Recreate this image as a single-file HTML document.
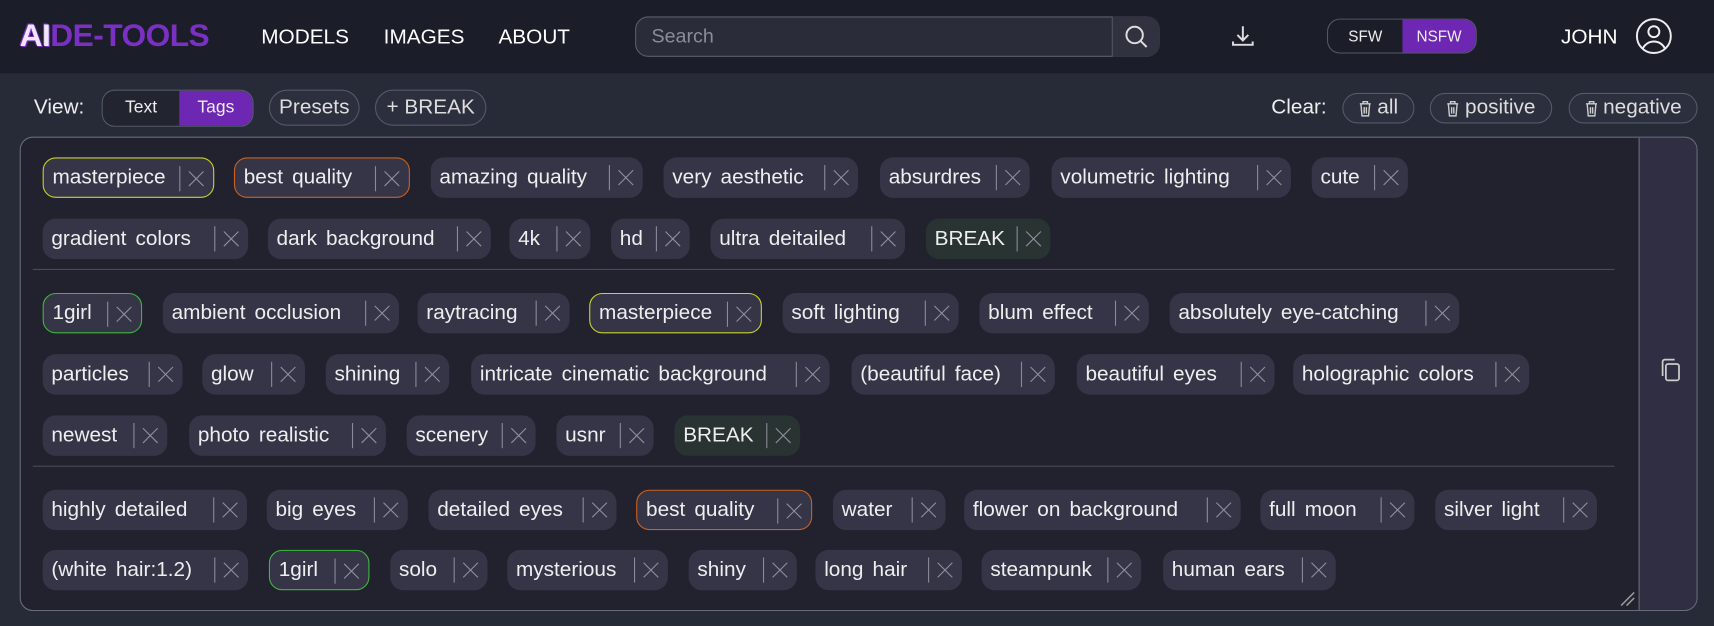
<!DOCTYPE html>
<html><head><meta charset="utf-8"><style>
*{box-sizing:border-box;margin:0;padding:0}
html,body{width:1714px;height:626px;overflow:hidden;background:#262b37;font-family:"Liberation Sans",sans-serif;color:#eee}
#w{position:absolute;left:0;top:0;width:1568px;height:573px;transform:scale(1.0931);transform-origin:0 0}
.hdr{position:absolute;left:0;top:0;width:1568px;height:67px;background:#1b1e29}
.abs{position:absolute}
.nav{font-size:19px;color:#fff;top:24px}
.btn{position:absolute;height:33px;border:1px solid #555a68;border-radius:17px;background:#2c2f3d;font-size:18px;color:#ddd;display:flex;align-items:center;justify-content:center;gap:5px}
.btn svg{flex:none}
.panel{position:absolute;left:18px;top:125px;width:1535px;height:434px;border:1px solid #6a6c7a;border-radius:12px;background:#22212e;overflow:hidden}
.side{position:absolute;right:0;top:0;width:53px;height:100%;background:#2f2e42;border-left:1px solid #6a6c7a}
.c{position:absolute;height:37px;border-radius:12px;background:#363548;font-size:19px;color:#eee;display:flex;align-items:center;padding-left:8px;word-spacing:3px;white-space:nowrap;overflow:hidden}
.c:after{content:"";position:absolute;right:30px;top:7px;height:23px;border-left:1px solid #8a8a98}
.c i{position:absolute;right:9px;top:9px;width:14px;height:18px}
.c i:before,.c i:after{content:"";position:absolute;left:7px;top:0;height:19px;border-left:1.3px solid #8f8f9c;transform:rotate(45deg)}
.c i:after{transform:rotate(-45deg)}
.y{border:1px solid #c9d12c}.o{border:1px solid #c8621e}.g{border:1px solid #3cb83c}.b{background:#283332}
.hr{position:absolute;left:11px;width:1447px;border-top:1px solid #4a4b5a}
</style></head><body><div id="w">
<div class="hdr">
<div class="abs" style="left:18px;top:17px;font-size:29px;font-weight:bold;letter-spacing:-0.5px;color:#7b30c4"><span style="color:#f0e6ff;text-shadow:0 0 2px #7b30c4,1px 1px 0 #7b30c4,-1px -1px 0 #7b30c4">AI</span>DE-TOOLS</div>
<div class="abs nav" style="left:239px">MODELS</div>
<div class="abs nav" style="left:351px">IMAGES</div>
<div class="abs nav" style="left:456px">ABOUT</div>
<div class="abs" style="left:581px;top:15px;width:480px;height:37px;border:1px solid #5a5d6a;border-radius:12px;background:#2a2d39"></div>
<div class="abs" style="left:596px;top:23px;font-size:18px;color:#8a8d98">Search</div>
<div class="abs" style="left:1017px;top:15px;width:44px;height:37px;border-left:1px solid #5a5d6a;background:#30323f;border-radius:0 12px 12px 0"></div>
<svg class="abs" style="left:1028px;top:22px" width="24" height="24" viewBox="0 0 24 24" fill="none" stroke="#ddd" stroke-width="1.8"><circle cx="10" cy="10" r="7.5"/><path d="M15.5 15.5L21 21"/></svg>
<svg class="abs" style="left:1125px;top:21px" width="24" height="24" viewBox="0 0 24 24" fill="none" stroke="#ddd" stroke-width="1.8"><path d="M12 3v13M7 11l5 5 5-5M3 17v3h18v-3"/></svg>
<div class="abs" style="left:1214px;top:17px;width:137px;height:32px;border:1px solid #555a68;border-radius:12px;overflow:hidden;display:flex;font-size:14px">
<div style="width:68px;display:flex;align-items:center;justify-content:center;background:#1b1e29">SFW</div>
<div style="flex:1;display:flex;align-items:center;justify-content:center;background:#6d27b3">NSFW</div></div>
<div class="abs nav" style="left:1428px">JOHN</div>
<svg class="abs" style="left:1496px;top:16px" width="34" height="34" viewBox="0 0 34 34" fill="none" stroke="#eee" stroke-width="1.8"><circle cx="17" cy="17" r="15.5"/><circle cx="17" cy="13" r="5"/><path d="M7 28c3-5 7-6 10-6s7 1 10 6"/></svg>
</div>
<div class="abs" style="left:31px;top:88px;font-size:19px">View:</div>
<div class="abs" style="left:93px;top:82px;width:139px;height:34px;border:1px solid #555a68;border-radius:12px;overflow:hidden;display:flex;font-size:16px">
<div style="width:70px;display:flex;align-items:center;justify-content:center;background:#22252f">Text</div>
<div style="flex:1;display:flex;align-items:center;justify-content:center;background:#6d27b3">Tags</div></div>
<div class="btn" style="left:246px;top:82px;width:83px;font-size:19px">Presets</div>
<div class="btn" style="left:343px;top:82px;width:102px;font-size:19px">+ BREAK</div>
<div class="abs" style="left:1163px;top:88px;font-size:19px">Clear:</div>
<div class="btn" style="left:1228px;top:85px;width:66px;height:28px;font-size:19px"><svg width="12" height="15" viewBox="0 0 12 15" fill="none" stroke="#ccc" stroke-width="1.3"><path d="M1 3h10M4 3V1h4v2M2 3l1 11h6l1-11M5 6v6M7 6v6"/></svg>all</div>
<div class="btn" style="left:1308px;top:85px;width:112px;height:28px;font-size:19px"><svg width="12" height="15" viewBox="0 0 12 15" fill="none" stroke="#ccc" stroke-width="1.3"><path d="M1 3h10M4 3V1h4v2M2 3l1 11h6l1-11M5 6v6M7 6v6"/></svg>positive</div>
<div class="btn" style="left:1435px;top:85px;width:118px;height:28px;font-size:19px"><svg width="12" height="15" viewBox="0 0 12 15" fill="none" stroke="#ccc" stroke-width="1.3"><path d="M1 3h10M4 3V1h4v2M2 3l1 11h6l1-11M5 6v6M7 6v6"/></svg>negative</div>
<div class="panel">
<div class="side"></div>
<svg class="abs" style="left:1497px;top:200px" width="24" height="26" viewBox="0 0 24 26" fill="none" stroke="#ccc" stroke-width="1.6"><rect x="8" y="7" width="12" height="15" rx="2"/><path d="M5 18V5a2 2 0 0 1 2-2h9"/></svg>
<svg class="abs" style="left:1460px;top:412px" width="18" height="18" viewBox="0 0 18 18" stroke="#999" stroke-width="1.4"><path d="M4 16L16 4M9 16L16 9"/></svg>
<div class="hr" style="top:120px"></div>
<div class="hr" style="top:300px"></div>
</div>
<div id="chips"></div>
<script>
var R=[[162,[["masterpiece",39,196,"y"],["best quality",214,375,"o"],["amazing quality",394,588],["very aesthetic",607,785],["absurdres",805,942],["volumetric lighting",962,1181],["cute",1200,1288]]],
[218,[["gradient colors",39,227],["dark background",245,449],["4k",466,540],["hd",559,631],["ultra deitailed",650,828],["BREAK",847,961,"b"]]],
[286,[["1girl",39,130,"g"],["ambient occlusion",149,365],["raytracing",382,521],["masterpiece",539,697,"y"],["soft lighting",716,877],["blum effect",896,1051],["absolutely eye-catching",1070,1335]]],
[342,[["particles",39,167],["glow",185,279],["shining",298,411],["intricate cinematic background",431,759],["(beautiful face)",779,965],["beautiful eyes",985,1166],["holographic colors",1183,1399]]],
[398,[["newest",39,153],["photo realistic",173,353],["scenery",372,490],["usnr",509,598],["BREAK",617,732,"b"]]],
[466,[["highly detailed",39,226],["big eyes",244,373],["detailed eyes",392,564],["best quality",582,743,"o"],["water",762,865],["flower on background",882,1135],["full moon",1153,1294],["silver light",1313,1461]]],
[521,[["(white hair:1.2)",39,227],["1girl",246,338,"g"],["solo",357,446],["mysterious",464,611],["shiny",630,729],["long hair",746,880],["steampunk",898,1044],["human ears",1064,1222]]]];
var h="";R.forEach(function(r){r[1].forEach(function(c){h+='<div class="c '+(c[3]||"")+'" style="left:'+c[1]+'px;top:'+(r[0]-18)+'px;width:'+(c[2]-c[1])+'px">'+c[0]+'<i></i></div>';});});
document.getElementById("chips").innerHTML=h;
</script>
</div></body></html>
